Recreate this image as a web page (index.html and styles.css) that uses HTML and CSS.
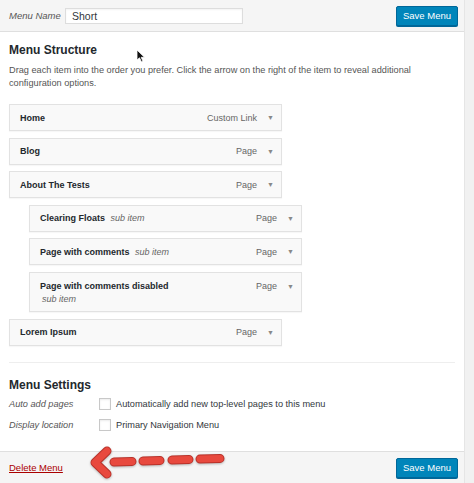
FILE: index.html
```html
<!DOCTYPE html>
<html lang="en">
<head>
    <meta charset="UTF-8">
    <title>Edit Menu</title>
    <link rel="stylesheet" href="styles.css">
</head>
<body>
    <div class="menu-edit">
        <div class="menu-header">
            <label class="menu-name-label">Menu Name</label>
            <input class="menu-name" type="text" value="Short">
            <button class="save-btn">Save Menu</button>
        </div>

        <div class="menu-body">
            <h3>Menu Structure</h3>
            <p class="desc">Drag each item into the order you prefer. Click the arrow on the right of the item to reveal additional configuration options.</p>

            <ul class="menu">
                <li class="item"><span class="title">Home</span><span class="type">Custom Link</span><span class="arrow">&#9660;</span></li>
                <li class="item"><span class="title">Blog</span><span class="type">Page</span><span class="arrow">&#9660;</span></li>
                <li class="item"><span class="title">About The Tests</span><span class="type">Page</span><span class="arrow">&#9660;</span></li>
                <li class="item sub"><span class="title">Clearing Floats <em>sub item</em></span><span class="type">Page</span><span class="arrow">&#9660;</span></li>
                <li class="item sub"><span class="title">Page with comments <em>sub item</em></span><span class="type">Page</span><span class="arrow">&#9660;</span></li>
                <li class="item sub tall"><span class="title">Page with comments disabled<br><em>sub item</em></span><span class="type">Page</span><span class="arrow">&#9660;</span></li>
                <li class="item"><span class="title">Lorem Ipsum</span><span class="type">Page</span><span class="arrow">&#9660;</span></li>
            </ul>

            <div class="settings">
                <h3>Menu Settings</h3>
                <div class="row">
                    <span class="row-label">Auto add pages</span>
                    <span class="check"></span>
                    <span>Automatically add new top-level pages to this menu</span>
                </div>
                <div class="row">
                    <span class="row-label">Display location</span>
                    <span class="check"></span>
                    <span>Primary Navigation Menu</span>
                </div>
            </div>
        </div>

        <div class="menu-footer">
            <a class="delete" href="#">Delete Menu</a>
            <button class="save-btn">Save Menu</button>
        </div>

        <!-- annotation arrow drawn over the footer -->
        <svg class="annot" width="140" height="34" viewBox="0 0 140 34">
            <g fill="none" stroke="#b8322a" stroke-width="9" stroke-linecap="round" stroke-linejoin="round">
                <polyline points="17,5 5,16.5 17,28"/>
                <line x1="24" y1="16" x2="42" y2="15.5"/>
                <line x1="53" y1="15" x2="70" y2="14.5"/>
                <line x1="82" y1="14" x2="99" y2="13.5"/>
                <line x1="110" y1="13" x2="130" y2="12.5"/>
            </g>
            <g fill="none" stroke="#e8493e" stroke-width="7" stroke-linecap="round" stroke-linejoin="round">
                <polyline points="17,5 5,16.5 17,28"/>
                <line x1="24" y1="16" x2="42" y2="15.5"/>
                <line x1="53" y1="15" x2="70" y2="14.5"/>
                <line x1="82" y1="14" x2="99" y2="13.5"/>
                <line x1="110" y1="13" x2="130" y2="12.5"/>
            </g>
        </svg>

        <svg class="cursor" width="10" height="14" viewBox="0 0 10 14">
            <path d="M1 1 L1 11 L3.5 8.8 L5.5 13 L7 12.3 L5.2 8.3 L8.5 8.3 Z" fill="#111" stroke="#fff" stroke-width="0.8"/>
        </svg>
    </div>
</body>
</html>
```

FILE: styles.css
```css
body {
    margin: 0;
    background-color: #f1f1f1;
    font-family: "Liberation Sans", Arial, sans-serif;
    color: #23282d;
}

.menu-edit {
    position: relative;
    width: 464px;
    height: 483px;
    background-color: #fff;
    border-right: 1px solid #e5e5e5;
    display: flex;
    flex-direction: column;
}

.menu-header {
    height: 32px;
    box-sizing: border-box;
    background-color: #f5f5f5;
    border-bottom: 1px solid #dfdfdf;
    display: flex;
    align-items: center;
    padding: 0 6px 0 9px;
}

.menu-name-label {
    font-size: 9.5px;
    font-style: italic;
    color: #555;
    width: 56px;
}

.menu-name {
    width: 178px;
    height: 16px;
    box-sizing: border-box;
    border: 1px solid #ddd;
    padding: 0 6px;
    font-family: inherit;
    font-size: 10.5px;
    color: #32373c;
    box-shadow: inset 0 1px 2px rgba(0, 0, 0, 0.05);
}

.save-btn {
    margin-left: auto;
    width: 62px;
    height: 20px;
    padding: 0;
    background-color: #0085ba;
    border: 1px solid #006799;
    border-radius: 2px;
    color: #fff;
    font-family: inherit;
    font-size: 9.5px;
    box-shadow: 0 1px 0 #006799;
}

.menu-body {
    flex: 1;
    padding: 0 9px;
}

h3 {
    margin: 9px 0 0;
    font-size: 12px;
    line-height: 18px;
    font-weight: bold;
    color: #23282d;
}

.desc {
    margin: 5px 0 0;
    font-size: 9.2px;
    line-height: 12.5px;
    color: #555;
}

.menu {
    list-style: none;
    margin: 15px 0 0;
    padding: 0;
}

.item {
    width: 273px;
    height: 27px;
    box-sizing: border-box;
    margin-bottom: 6.6px;
    background-color: #f9f9f9;
    border: 1px solid #e2e2e2;
    display: flex;
    align-items: center;
    padding: 0 7px 0 10px;
    font-size: 9px;
    box-shadow: 0 1px 1px rgba(0, 0, 0, 0.03);
}

.item.sub {
    margin-left: 20px;
}

.item.tall {
    height: 40px;
    align-items: flex-start;
    padding-top: 7px;
}

.item.tall .title {
    line-height: 13px;
}

.item.tall em {
    margin-left: 2px;
}

.title {
    font-weight: bold;
    color: #23282d;
}

.title em {
    font-weight: normal;
    color: #666;
    margin-left: 3px;
}

.type {
    margin-left: auto;
    color: #666;
    font-size: 9px;
}

.tall .type,
.tall .arrow {
    line-height: 13px;
}

.arrow {
    margin-left: 10px;
    color: #888;
    font-size: 7px;
}

.settings {
    margin-top: 16px;
    border-top: 1px solid #eee;
    padding-top: 4px;
}

.row {
    display: flex;
    align-items: center;
    height: 21px;
    font-size: 9.2px;
    color: #32373c;
}

.row-label {
    width: 90px;
    font-style: italic;
    color: #555;
}

.check {
    width: 10px;
    height: 10px;
    border: 1px solid #c8c8c8;
    background-color: #fff;
    margin-right: 5px;
    box-shadow: inset 0 1px 2px rgba(0, 0, 0, 0.08);
}

.menu-footer {
    height: 32px;
    box-sizing: border-box;
    background-color: #f5f5f5;
    border-top: 1px solid #dfdfdf;
    display: flex;
    align-items: center;
    padding: 0 6px 0 9px;
}

.delete {
    color: #a00;
    font-size: 9.5px;
    text-decoration: underline;
}

.annot {
    position: absolute;
    left: 90px;
    top: 446px;
    filter: drop-shadow(0 1px 1px rgba(0, 0, 0, 0.25));
}

.cursor {
    position: absolute;
    left: 136px;
    top: 49px;
}
```
